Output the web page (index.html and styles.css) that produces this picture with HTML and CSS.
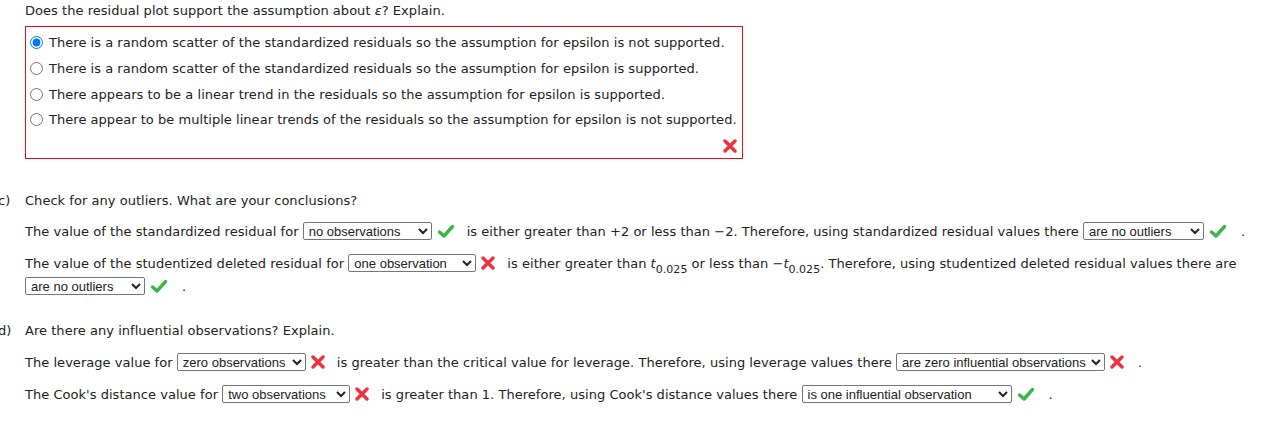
FILE: index.html
```html
<!DOCTYPE html>
<html>
<head>
<meta charset="utf-8">
<link rel="stylesheet" href="styles.css">
</head>
<body>
<div class="page">
  <p class="question">Does the residual plot support the assumption about <i>ε</i>? Explain.</p>
  <div class="answer-box">
    <label class="opt"><input type="radio" name="q" checked><span>There is a random scatter of the standardized residuals so the assumption for epsilon is not supported.</span></label>
    <label class="opt"><input type="radio" name="q"><span>There is a random scatter of the standardized residuals so the assumption for epsilon is supported.</span></label>
    <label class="opt"><input type="radio" name="q"><span>There appears to be a linear trend in the residuals so the assumption for epsilon is supported.</span></label>
    <label class="opt"><input type="radio" name="q"><span>There appear to be multiple linear trends of the residuals so the assumption for epsilon is not supported.</span></label>
    <div class="box-mark">
      <svg class="icon-x" viewBox="0 0 14 14"><path d="M2 2 L12 12 M12 2 L2 12" stroke="#f0303c" stroke-width="3.4" stroke-linecap="round"/></svg>
    </div>
  </div>

  <div class="part part-c">
    <span class="part-label">c)</span><span>Check for any outliers. What are your conclusions?</span>
  </div>
  <p class="line l1">The value of the standardized residual for <select class="s1"><option>no observations</option></select><svg class="icon-check" viewBox="0 0 18 16"><path d="M2.5 9 L7 13 L15.5 3.5" fill="none" stroke="#3bb44a" stroke-width="3.4" stroke-linecap="round" stroke-linejoin="round"/></svg><span class="after">is either greater than +2 or less than −2. Therefore, using standardized residual values there</span> <select class="s2"><option>are no outliers</option></select><svg class="icon-check" viewBox="0 0 18 16"><path d="M2.5 9 L7 13 L15.5 3.5" fill="none" stroke="#3bb44a" stroke-width="3.4" stroke-linecap="round" stroke-linejoin="round"/></svg><span class="dot">.</span></p>
  <p class="line l2">The value of the studentized deleted residual for <select class="s3"><option>one observation</option></select><svg class="icon-x" viewBox="0 0 14 14"><path d="M2 2 L12 12 M12 2 L2 12" stroke="#f0303c" stroke-width="3.4" stroke-linecap="round"/></svg><span class="after">is either greater than <i>t</i><sub>0.025</sub> or less than −<i>t</i><sub>0.025</sub>. Therefore, using studentized deleted residual values there are</span> <select class="s4"><option>are no outliers</option></select><svg class="icon-check" viewBox="0 0 18 16"><path d="M2.5 9 L7 13 L15.5 3.5" fill="none" stroke="#3bb44a" stroke-width="3.4" stroke-linecap="round" stroke-linejoin="round"/></svg><span class="dot">.</span></p>

  <div class="part part-d">
    <span class="part-label">d)</span><span>Are there any influential observations? Explain.</span>
  </div>
  <p class="line l3">The leverage value for <select class="s5"><option>zero observations</option></select><svg class="icon-x" viewBox="0 0 14 14"><path d="M2 2 L12 12 M12 2 L2 12" stroke="#f0303c" stroke-width="3.4" stroke-linecap="round"/></svg><span class="after">is greater than the critical value for leverage. Therefore, using leverage values there</span> <select class="s6"><option>are zero influential observations</option></select><svg class="icon-x" viewBox="0 0 14 14"><path d="M2 2 L12 12 M12 2 L2 12" stroke="#f0303c" stroke-width="3.4" stroke-linecap="round"/></svg><span class="dot">.</span></p>
  <p class="line l4">The Cook's distance value for <select class="s7"><option>two observations</option></select><svg class="icon-x" viewBox="0 0 14 14"><path d="M2 2 L12 12 M12 2 L2 12" stroke="#f0303c" stroke-width="3.4" stroke-linecap="round"/></svg><span class="after">is greater than 1. Therefore, using Cook's distance values there</span> <select class="s8"><option>is one influential observation</option></select><svg class="icon-check" viewBox="0 0 18 16"><path d="M2.5 9 L7 13 L15.5 3.5" fill="none" stroke="#3bb44a" stroke-width="3.4" stroke-linecap="round" stroke-linejoin="round"/></svg><span class="dot">.</span></p>
</div>
</body>
</html>
```

FILE: styles.css
```css
html, body {
  margin: 0;
  padding: 0;
  background: #fff;
}
body {
  font-family: "DejaVu Sans", Verdana, sans-serif;
  font-size: 13px;
  letter-spacing: 0.035px;
  color: #222;
}
.page {
  padding-left: 25px;
}
p {
  margin: 0;
}
.question {
  line-height: 16px;
  padding-top: 3px;
}
.answer-box {
  margin-top: 7px;
  width: 716px;
  border: 1px solid #e0101a;
  padding: 3px 0 3px 0;
}
.opt {
  display: flex;
  align-items: center;
  height: 25.67px;
}
.opt input {
  margin: 0 6px 0 4px;
  width: 13px;
  height: 13px;
}
.box-mark {
  display: flex;
  justify-content: flex-end;
  padding-right: 5px;
  margin-top: 4px;
  height: 18px;
  align-items: center;
}
.icon-x {
  width: 14px;
  height: 14px;
  vertical-align: -2px;
}
.icon-check {
  width: 18px;
  height: 16px;
  vertical-align: -3px;
}
.part {
  display: flex;
  line-height: 20px;
  margin-left: -27px;
}
.part-label {
  width: 27px;
}
.part-c {
  margin-top: 32px;
}
.part-d {
  margin-top: 22.5px;
}
.line {
  line-height: 20px;
  white-space: nowrap;
}
.l1 {
  margin-top: 11px;
}
.l2 {
  margin-top: 10.5px;
  line-height: 23px;
  white-space: normal;
  width: 1230px;
}
.l3 {
  margin-top: 12px;
}
.l4 {
  margin-top: 12px;
}
select {
  font-family: "Liberation Sans", Arial, sans-serif;
  font-size: 13px;
  letter-spacing: 0;
  height: 18px;
  border: 1px solid #767676;
  border-radius: 2px;
  background: #fff;
  color: #222;
  padding: 0 0 0 1px;
  margin: 0;
  vertical-align: 0px;
}
select + svg {
  margin-left: 5px;
}
.after {
  margin-left: 12px;
}
.dot {
  margin-left: 14px;
}
sub {
  font-size: 11px;
  vertical-align: -5px;
  line-height: 0;
}
.s1 { width: 129px; }
.s2 { width: 121px; }
.s3 { width: 128px; }
.s4 { width: 120px; }
.s5 { width: 129px; }
.s6 { width: 209px; }
.s7 { width: 128px; }
.s8 { width: 210px; }
```
